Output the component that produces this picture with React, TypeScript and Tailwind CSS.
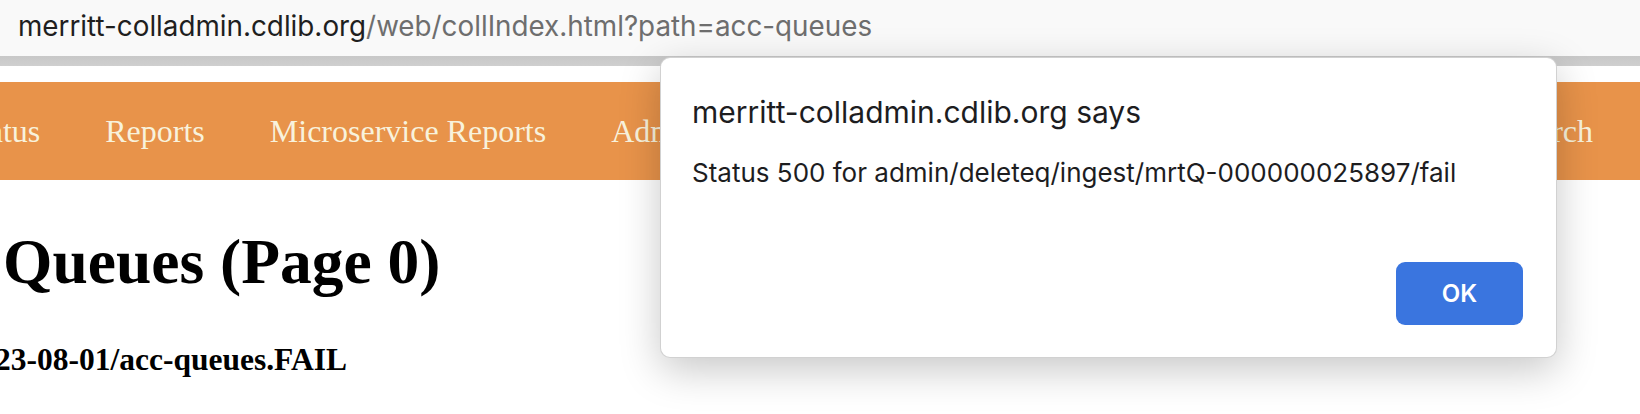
export default function App() {
  const navItems = ['Status', 'Reports', 'Microservice Reports', 'Admin']

  return (
    <div className="relative w-[1640px] h-[414px] overflow-hidden bg-white">
      {/* browser address bar */}
      <div className="h-[56px] bg-[#f9f9f9] pl-[18px] pt-[5px] font-['Inter',sans-serif] text-[27.8px] leading-[42px]">
        <span className="text-[#1f1f1f]">merritt-colladmin.cdlib.org</span>
        <span className="text-[#6e6e6e]">/web/collIndex.html?path=acc-queues</span>
      </div>
      <div className="h-[10px] bg-gradient-to-b from-[#c8c8c8] to-[#cfcfcf]" />

      {/* page, scrolled a little to the right */}
      <div className="pt-[16px] font-['Liberation_Serif','Times_New_Roman',serif]">
        <nav className="h-[98px] bg-[#e8934a] flex items-center text-[32px] text-[#f8f2dc] overflow-hidden">
          <div className="flex items-center gap-[65px] ml-[-38px]">
            {navItems.map((item) => (
              <span key={item} className="whitespace-nowrap">
                {item}
              </span>
            ))}
          </div>
          <span className="ml-auto mr-[47px]">Search</span>
        </nav>

        <h1 className="mt-[44px] ml-[3px] text-[63.5px] leading-[76px] font-bold text-black">Queues (Page 0)</h1>
        <h4 className="mt-[42px] ml-[-5px] text-[31.5px] leading-[36px] font-bold text-black">
          23-08-01/acc-queues.FAIL
        </h4>
      </div>

      {/* alert dialog */}
      <div className="absolute left-[660px] top-[57px] w-[897px] h-[301px] rounded-[10px] bg-white border border-[rgba(0,0,0,0.18)] shadow-[0_12px_40px_rgba(0,0,0,0.22)] font-['Inter',sans-serif] text-[#1d1d1f] flex flex-col">
        <div className="pl-[31px] pt-[36px] text-[30px] leading-[36px]">merritt-colladmin.cdlib.org says</div>
        <div className="pl-[31px] pt-[27px] text-[26px] leading-[32px]">
          Status 500 for admin/deleteq/ingest/mrtQ-000000025897/fail
        </div>
        <div className="mt-auto flex justify-end pr-[33px] pb-[32px]">
          <button className="w-[127px] h-[63px] rounded-[9px] bg-[#3a75df] text-white text-[24px] font-semibold">
            OK
          </button>
        </div>
      </div>
    </div>
  )
}
